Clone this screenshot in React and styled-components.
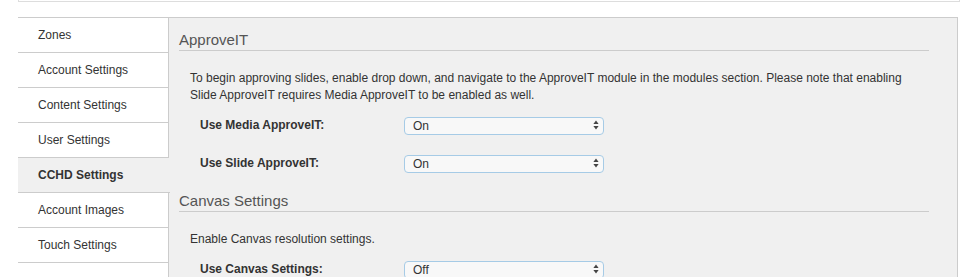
import React from "react";
import styled, { createGlobalStyle } from "styled-components";

const Global = createGlobalStyle`
  html, body { margin: 0; padding: 0; background: #fff; }
  body { font-family: "Liberation Sans", Arial, Helvetica, sans-serif; color: #333; }
  * { box-sizing: border-box; }
`;

const Page = styled.div`
  width: 978px;
  height: 277px;
  overflow: hidden;
  padding: 0 18px;
`;

const TopBar = styled.div`
  width: 942px;
  height: 2px;
  background: #fff;
  border: 1px solid #ddd;
  border-top: none;
`;

const Main = styled.div`
  display: flex;
  width: 940px;
  margin-top: 15px;
  align-items: flex-start;
`;

const Sidebar = styled.ul`
  list-style: none;
  margin: 0;
  padding: 0;
  width: 150px;
  flex: none;
  border-top: 1px solid #ccc;
  position: relative;
  z-index: 1;
`;

const NavItem = styled.li`
  height: 35px;
  display: flex;
  align-items: center;
  padding-left: 20px;
  font-size: 12px;
  color: #333;
  border-bottom: 1px solid #ccc;
  background: ${(p) => (p.$active ? "#f0f0f0" : "#fff")};
  font-weight: ${(p) => (p.$active ? "bold" : "normal")};
  margin-right: ${(p) => (p.$active ? "-2px" : "0")};
`;

const Panel = styled.div`
  flex: 1;
  height: 280px;
  background: #f0f0f0;
  border: 1px solid #ccc;
  border-bottom: none;
  padding: 12px 28px 0 10px;
`;

const Heading = styled.h2`
  margin: ${(p) => (p.$first ? "0" : "9px 0 0")};
  height: 21px;
  line-height: 20px;
  font-size: 15px;
  font-weight: normal;
  color: #555;
  border-bottom: 1px solid #ccc;
`;

const Text = styled.p`
  margin: 19px 0 2px;
  padding-left: 11px;
  font-size: 12px;
  line-height: 17px;
  color: #333;
`;

const Row = styled.div`
  display: flex;
  align-items: center;
  height: 38px;
  padding-left: 21px;
`;

const Label = styled.label`
  width: 204px;
  font-size: 12px;
  font-weight: bold;
  color: #333;
`;

const SelectWrap = styled.div`
  position: relative;
  width: 200px;
  height: 18px;
`;

const Select = styled.select`
  appearance: none;
  -webkit-appearance: none;
  width: 100%;
  height: 100%;
  margin: 0;
  padding: 0 0 0 8px;
  font-family: "Liberation Sans", Arial, sans-serif;
  font-size: 12px;
  color: #333;
  background: #f8f8f8;
  border: 1px solid #a6cbe6;
  border-radius: 4px;
  outline: none;
`;

const Arrows = styled.svg`
  position: absolute;
  right: 5px;
  top: 4px;
  pointer-events: none;
`;

function Dropdown({ value, id }) {
  return (
    <SelectWrap>
      <Select id={id} defaultValue={value}>
        <option>On</option>
        <option>Off</option>
      </Select>
      <Arrows width="6" height="10" viewBox="0 0 6 10">
        <path d="M3 0.5 L5.6 4 L0.4 4 Z" fill="#444" />
        <path d="M3 9.5 L5.6 6 L0.4 6 Z" fill="#444" />
      </Arrows>
    </SelectWrap>
  );
}

const nav = [
  "Zones",
  "Account Settings",
  "Content Settings",
  "User Settings",
  "CCHD Settings",
  "Account Images",
  "Touch Settings",
];

export default function App() {
  return (
    <Page>
      <Global />
      <TopBar />
      <Main>
        <Sidebar>
          {nav.map((n) => (
            <NavItem key={n} $active={n === "CCHD Settings"}>
              {n}
            </NavItem>
          ))}
        </Sidebar>
        <Panel>
          <Heading $first>ApproveIT</Heading>
          <Text>
            To begin approving slides, enable drop down, and navigate to the ApproveIT module in the modules section. Please note that enabling
            <br />
            Slide ApproveIT requires Media ApproveIT to be enabled as well.
          </Text>
          <Row>
            <Label htmlFor="media">Use Media ApproveIT:</Label>
            <Dropdown id="media" value="On" />
          </Row>
          <Row>
            <Label htmlFor="slide">Use Slide ApproveIT:</Label>
            <Dropdown id="slide" value="On" />
          </Row>
          <Heading>Canvas Settings</Heading>
          <Text>Enable Canvas resolution settings.</Text>
          <Row>
            <Label htmlFor="canvas">Use Canvas Settings:</Label>
            <Dropdown id="canvas" value="Off" />
          </Row>
        </Panel>
      </Main>
    </Page>
  );
}
